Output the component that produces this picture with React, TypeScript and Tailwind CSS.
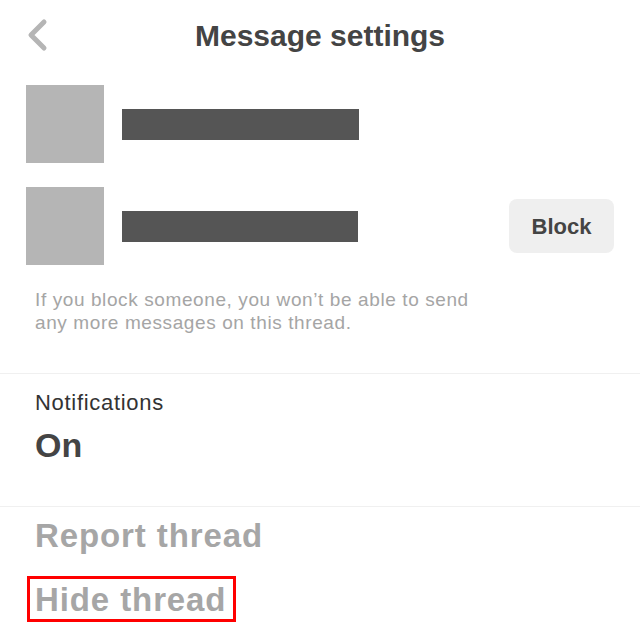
import React from 'react';

const font = { fontFamily: '"Liberation Sans", Arial, sans-serif' };

const BackChevron = () => (
  <svg width="24" height="34" viewBox="0 0 24 34" fill="none">
    <path d="M19 4 L6 17 L19 30" stroke="#b5b5b5" strokeWidth="5" strokeLinecap="round" strokeLinejoin="round" />
  </svg>
);

const Participant: React.FC<{ barWidth: string; action?: React.ReactNode }> = ({ barWidth, action }) => (
  <div className="flex items-center">
    <div className="w-[78px] h-[78px] bg-[#b5b5b5] shrink-0" />
    <div className={`ml-[18px] h-[31px] bg-[#555555] ${barWidth}`} />
    <div className="flex-1" />
    {action}
  </div>
);

export default function App() {
  return (
    <div className="w-[640px] h-[634px] bg-white overflow-hidden" style={font}>
      {/* Header */}
      <div className="relative flex justify-center pt-[21px]">
        <div className="absolute left-[25px] top-[18px]">
          <BackChevron />
        </div>
        <h1 className="text-[30px] leading-[30px] font-bold text-[#444444]">Message settings</h1>
      </div>

      {/* People in thread */}
      <div className="px-[26px] mt-[34px] flex flex-col gap-[24px]">
        <Participant barWidth="w-[237px]" />
        <Participant
          barWidth="w-[236px]"
          action={
            <button className="w-[105px] h-[54px] rounded-[8px] bg-[#efefef] text-[22px] font-bold text-[#444444]">
              Block
            </button>
          }
        />
      </div>

      <p className="pl-[35px] mt-[23px] text-[19px] leading-[23px] tracking-[0.6px] text-[#a5a5a5] w-[490px]">
        If you block someone, you won’t be able to send any more messages on this thread.
      </p>

      <div className="mt-[39px] border-t border-[#f0f0f0]" />

      {/* Notifications */}
      <div className="px-[35px] pt-[15px]">
        <div className="text-[22px] leading-[28px] tracking-[0.7px] text-[#333333]">Notifications</div>
        <div className="mt-[8px] text-[34px] leading-[40px] font-bold text-[#444444]">On</div>
      </div>

      <div className="mt-[41px] border-t border-[#f0f0f0]" />

      {/* Thread actions */}
      <div className="pt-[9px]">
        <div className="px-[35px] text-[33px] leading-[40px] tracking-[0.9px] font-bold text-[#a6a6a6]">
          Report thread
        </div>
        <div className="pl-[27px] mt-[20px]">
          <div className="inline-block border-[3px] border-[#ff0000] pl-[5px] pr-[7px] pt-[3px] pb-[1px] text-[33px] leading-[36px] tracking-[0.9px] font-bold text-[#a6a6a6]">
            Hide thread
          </div>
        </div>
      </div>
    </div>
  );
}
